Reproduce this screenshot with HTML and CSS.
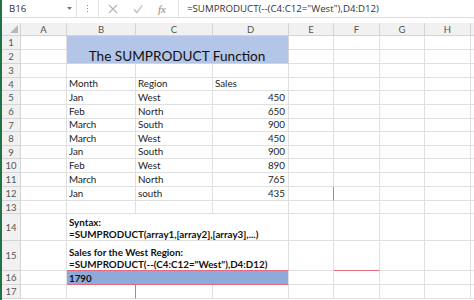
FILE: index.html
```html
<!DOCTYPE html>
<html lang="en">

<head>
    <meta charset="UTF-8">
    <title>SUMPRODUCT</title>
    <link rel="stylesheet" href="styles.css">
</head>

<body>
    <div class="app">
        <!-- formula bar -->
        <div class="fbar">
            <div class="namebox">
                <span>B16</span>
                <svg class="drop" width="5" height="3" viewBox="0 0 5 3"><path d="M0 0h5L2.5 3z" fill="#777" /></svg>
            </div>
            <div class="grip">
                <i></i><i></i><i></i>
            </div>
            <div class="fbtns">
                <svg width="10" height="10" viewBox="0 0 10 10"><path d="M1 1l8 8M9 1l-8 8" stroke="#b5b5b5" stroke-width="1.2" fill="none" /></svg>
                <svg width="10" height="10" viewBox="0 0 10 10"><path d="M1 5.5l2.8 3L9.2 1.5" stroke="#b5b5b5" stroke-width="1.2" fill="none" /></svg>
                <span class="fx">fx</span>
            </div>
            <div class="formula">=SUMPRODUCT(--(C4:C12="West"),D4:D12)</div>
        </div>

        <!-- sheet -->
        <div class="sheet">
            <div class="corner"><svg width="8" height="8" viewBox="0 0 8 8"><path d="M8 0v8H0z" fill="#b8b8b8" /></svg></div>
            <div class="h">A</div>
            <div class="h">B</div>
            <div class="h">C</div>
            <div class="h">D</div>
            <div class="h">E</div>
            <div class="h">F</div>
            <div class="h">G</div>
            <div class="h">H</div>
            <div class="h"></div>

            <div class="rh">1</div>
            <div class="c"></div>
            <div class="c title">The SUMPRODUCT Function</div>
            <div class="c"></div><div class="c"></div><div class="c"></div><div class="c"></div><div class="c"></div>

            <div class="rh">2</div>
            <div class="c"></div>
            <div class="c"></div><div class="c"></div><div class="c"></div><div class="c"></div><div class="c"></div>

            <div class="rh">3</div>
            <div class="c"></div><div class="c"></div><div class="c"></div><div class="c"></div>
            <div class="c"></div><div class="c"></div><div class="c"></div><div class="c"></div><div class="c"></div>

            <div class="rh">4</div>
            <div class="c"></div><div class="c">Month</div><div class="c">Region</div><div class="c">Sales</div>
            <div class="c"></div><div class="c"></div><div class="c"></div><div class="c"></div><div class="c"></div>

            <div class="rh">5</div>
            <div class="c"></div><div class="c">Jan</div><div class="c">West</div><div class="c num">450</div>
            <div class="c"></div><div class="c"></div><div class="c"></div><div class="c"></div><div class="c"></div>

            <div class="rh">6</div>
            <div class="c"></div><div class="c">Feb</div><div class="c">North</div><div class="c num">650</div>
            <div class="c"></div><div class="c"></div><div class="c"></div><div class="c"></div><div class="c"></div>

            <div class="rh">7</div>
            <div class="c"></div><div class="c">March</div><div class="c">South</div><div class="c num">900</div>
            <div class="c"></div><div class="c"></div><div class="c"></div><div class="c"></div><div class="c"></div>

            <div class="rh">8</div>
            <div class="c"></div><div class="c">March</div><div class="c">West</div><div class="c num">450</div>
            <div class="c"></div><div class="c"></div><div class="c"></div><div class="c"></div><div class="c"></div>

            <div class="rh">9</div>
            <div class="c"></div><div class="c">Jan</div><div class="c">South</div><div class="c num">900</div>
            <div class="c"></div><div class="c"></div><div class="c"></div><div class="c"></div><div class="c"></div>

            <div class="rh">10</div>
            <div class="c"></div><div class="c">Feb</div><div class="c">West</div><div class="c num">890</div>
            <div class="c"></div><div class="c"></div><div class="c"></div><div class="c"></div><div class="c"></div>

            <div class="rh">11</div>
            <div class="c"></div><div class="c">March</div><div class="c">North</div><div class="c num">765</div>
            <div class="c"></div><div class="c"></div><div class="c"></div><div class="c"></div><div class="c"></div>

            <div class="rh">12</div>
            <div class="c"></div><div class="c">Jan</div><div class="c">south</div><div class="c num">435</div>
            <div class="c red-r"></div><div class="c"></div><div class="c"></div><div class="c"></div><div class="c"></div>

            <div class="rh">13</div>
            <div class="c"></div><div class="c"></div><div class="c"></div><div class="c"></div>
            <div class="c"></div><div class="c"></div><div class="c"></div><div class="c"></div><div class="c"></div>

            <div class="rh">14</div>
            <div class="c"></div>
            <div class="c wide bold">Syntax:<br>=SUMPRODUCT(array1,[array2],[array3],...)</div>
            <div class="c"></div><div class="c"></div><div class="c"></div><div class="c"></div><div class="c"></div>

            <div class="rh">15</div>
            <div class="c"></div>
            <div class="c wide bold red-b">Sales for the West Region:<br>=SUMPRODUCT(--(C4:C12="West"),D4:D12)</div>
            <div class="c"></div><div class="c red-b"></div><div class="c"></div><div class="c"></div><div class="c"></div>

            <div class="rh">16</div>
            <div class="c"></div>
            <div class="c wide bold total">1790</div>
            <div class="c"></div><div class="c"></div><div class="c"></div><div class="c"></div><div class="c"></div>

            <div class="rh">17</div>
            <div class="c"></div><div class="c red-r"></div><div class="c"></div><div class="c"></div>
            <div class="c"></div><div class="c"></div><div class="c"></div><div class="c"></div><div class="c"></div>
        </div>
    </div>
</body>

</html>
```

FILE: styles.css
```css
* {
    margin: 0;
    padding: 0;
    box-sizing: border-box;
}

body {
    background: #fff;
    width: 474px;
    height: 300px;
    overflow: hidden;
}

.app {
    border-left: 2px solid #217346;
    height: 300px;
    font-family: "Lato", "Liberation Sans", sans-serif;
}

/* 수식 입력줄 */
.fbar {
    display: flex;
    height: 18px;
    border-bottom: 1px solid #dcdcdc;
    font-family: "Open Sans", "Liberation Sans", sans-serif;
    font-size: 9.7px;
    color: #333;
}

.namebox {
    display: flex;
    align-items: center;
    justify-content: space-between;
    width: 75px;
    padding: 0 4px 0 7px;
    border-right: 1px solid #e2e2e2;
}

.grip {
    display: flex;
    flex-direction: column;
    justify-content: center;
    gap: 2px;
    width: 21px;
    padding-left: 10px;
}

.grip i {
    display: block;
    width: 1px;
    height: 1px;
    background: #888;
}

.fbtns {
    display: flex;
    align-items: center;
    gap: 15px;
    width: 81px;
    padding-left: 9px;
    border-left: 1px solid #e2e2e2;
    border-right: 1px solid #e2e2e2;
}

.fx {
    font-family: "Liberation Serif", serif;
    font-style: italic;
    font-size: 11px;
    color: #888;
}

.formula {
    flex: 1;
    display: flex;
    align-items: center;
    padding-left: 8px;
    white-space: nowrap;
}

/* 시트 */
.sheet {
    display: grid;
    grid-template-columns: 19px 46px 69px 77px 76px 45px 46px 45px 46px 1fr;
    grid-template-rows: 13px 14px 14px 14px 13px 14px 14px 13px 14px 13px 14px 14px 14px 13px 27px 30px 14px 14px;
    margin-top: 5px;
    font-size: 9.8px;
    color: #222;
}

.corner,
.h,
.rh {
    display: flex;
    align-items: center;
    justify-content: center;
    background: #f1f1f1;
    border-right: 1px solid #d4d4d4;
    border-bottom: 1px solid #d4d4d4;
    color: #555;
    font-size: 9.5px;
}

.corner {
    align-items: flex-end;
    justify-content: flex-end;
    padding: 0 2px 2px 0;
}

.c {
    display: flex;
    align-items: flex-end;
    padding: 0 3px 1px 2px;
    border-right: 1px solid #e0e0e0;
    border-bottom: 1px solid #e0e0e0;
    white-space: nowrap;
    line-height: 12px;
}

.num {
    justify-content: flex-end;
}

.title {
    grid-column: span 3;
    grid-row: span 2;
    justify-content: center;
    padding-bottom: 0;
    background: #b4c6e7;
    border-color: #b4c6e7 #d4d4d4 #d4d4d4;
    font-size: 13.6px;
    line-height: 13px;
    color: #111;
}

.wide {
    grid-column: span 3;
}

.wide.bold {
    padding-bottom: 0;
}

.bold {
    font-weight: bold;
    color: #111;
}

.total {
    background: #8eaadb;
    border-bottom-color: #e06c7c;
}

.red-b {
    border-bottom-color: #e06c7c;
}

.red-r {
    border-right-color: #e06c7c;
}
```
